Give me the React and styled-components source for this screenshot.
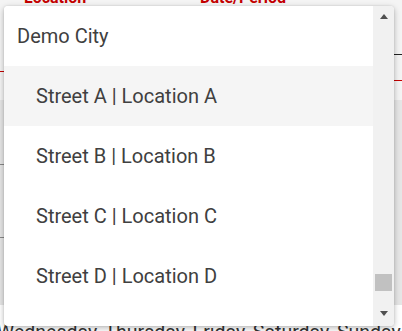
import React from 'react';
import styled, { createGlobalStyle } from 'styled-components';

const GlobalStyle = createGlobalStyle`
  html, body {
    margin: 0;
    padding: 0;
    background: #ffffff;
  }
  body {
    font-family: Roboto, "Noto Sans", Arial, sans-serif;
  }
`;

const Page = styled.div`
  position: relative;
  width: 402px;
  height: 331px;
  overflow: hidden;
  background: #ffffff;
`;

const Backdrop = styled.div`
  display: grid;
  grid-template-columns: 200px 202px;
  grid-template-rows: 305px 26px;
`;

const Column = styled.div`
  display: flex;
  flex-direction: column;
`;

const TopBand = styled.div`
  height: 100px;
  background: #f4f4f4;
  display: flex;
  flex-direction: column;
  box-sizing: border-box;
`;

const Label = styled.div`
  color: #c40000;
  font-weight: 700;
  font-size: 16px;
  line-height: 16px;
  margin-top: -10px;
  padding-left: ${p => p.indent}px;
  white-space: nowrap;
`;

const Rule = styled.div`
  height: 1px;
  background: ${p => p.color};
  margin-top: ${p => p.gap}px;
`;

const GrayBand = styled.div`
  flex: 1;
  background: #e6e6e6;
  display: flex;
  flex-direction: column;
`;

const Plus = styled.div`
  margin-top: 91px;
  margin-left: 8px;
  width: 14px;
  height: 2px;
  background: #111;
  position: relative;

  &::after {
    content: '';
    position: absolute;
    left: 3px;
    top: -8px;
    width: 2px;
    height: 18px;
    background: #8a4a00;
  }
`;

const Days = styled.div`
  grid-column: 1 / span 2;
  font-size: 19.5px;
  line-height: 22px;
  color: #333;
  white-space: nowrap;
  margin-left: -3px;
  padding-top: 17px;
`;

const Panel = styled.div`
  position: absolute;
  left: 4px;
  top: 6px;
  width: 390px;
  height: 320px;
  background: #ffffff;
  border-radius: 4px;
  box-shadow: 0 2px 6px rgba(0, 0, 0, 0.28), 0 0 2px rgba(0, 0, 0, 0.12);
  display: flex;
  overflow: hidden;
`;

const List = styled.ul`
  flex: 1;
  margin: 0;
  padding: 0;
  list-style: none;
`;

const Option = styled.li`
  height: 60px;
  display: flex;
  align-items: center;
  padding-left: ${p => (p.group ? 13 : 32)}px;
  font-size: 20px;
  color: #404040;
  background: ${p => (p.active ? '#f5f5f5' : '#ffffff')};
  white-space: nowrap;
`;

const Scrollbar = styled.div`
  width: 21px;
  background: #f1f1f1;
  display: flex;
  flex-direction: column;
  align-items: center;
`;

const Arrow = styled.div`
  width: 0;
  height: 0;
  border-left: 4px solid transparent;
  border-right: 4px solid transparent;
  ${p =>
    p.down
      ? 'border-top: 5px solid #505050; margin: 20px 0 10px;'
      : 'border-bottom: 5px solid #505050; margin-top: 8px;'}
`;

const Track = styled.div`
  flex: 1;
  width: 100%;
  display: flex;
  flex-direction: column;
  justify-content: flex-end;
  align-items: center;
`;

const Thumb = styled.div`
  width: 17px;
  height: 17px;
  background: #c1c1c1;
`;

const options = [
  { label: 'Demo City', group: true },
  { label: 'Street A | Location A', active: true },
  { label: 'Street B | Location B' },
  { label: 'Street C | Location C' },
  { label: 'Street D | Location D' }
];

export default function App() {
  return (
    <>
      <GlobalStyle />
      <Page>
        <Backdrop>
          <Column>
            <TopBand>
              <Label indent={24}>Location</Label>
              <Rule color="#c40000" gap={65} />
            </TopBand>
            <GrayBand>
              <Rule color="#888" gap={64} />
              <Rule color="#888" gap={72} />
            </GrayBand>
          </Column>
          <Column>
            <TopBand>
              <Label indent={-10}>Date/Period</Label>
              <Rule color="#222" gap={48} />
              <Rule color="#c40000" gap={25} />
            </TopBand>
            <GrayBand>
              <Plus />
            </GrayBand>
          </Column>
          <Days>Wednesday, Thursday, Friday, Saturday, Sunday</Days>
        </Backdrop>

        <Panel>
          <List>
            {options.map(({ label, group, active }) => (
              <Option key={label} group={group} active={active}>
                {label}
              </Option>
            ))}
          </List>
          <Scrollbar>
            <Arrow />
            <Track>
              <Thumb />
            </Track>
            <Arrow down />
          </Scrollbar>
        </Panel>
      </Page>
    </>
  );
}
